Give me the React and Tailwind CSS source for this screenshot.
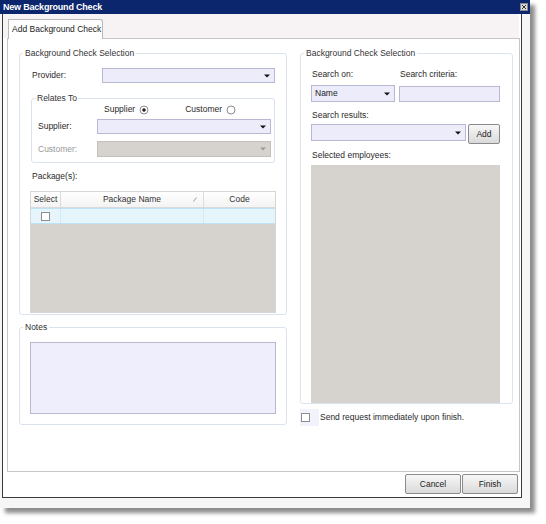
import React from 'react';

function Arrow({ disabled }) {
  return (
    <svg width="6" height="4" viewBox="0 0 6 4" className="mr-[4px] shrink-0">
      <path d="M0 0.5h6L3 3.5z" fill={disabled ? '#9a9a9a' : '#111'} />
    </svg>
  );
}

function Select({ className, value, disabled }) {
  return (
    <div
      className={
        'flex items-center justify-between border ' +
        (disabled ? 'bg-[#d6d3ce] border-[#c4c1bc] ' : 'bg-[#ececfb] border-[#b8b8d2] ') +
        className
      }
    >
      <span className="pl-[3px] text-[#222]">{value}</span>
      <Arrow disabled={disabled} />
    </div>
  );
}

function Group({ title, className, children }) {
  return (
    <div className={'border border-[#dbe3ec] rounded-[3px] bg-white ' + className}>
      <div className="-mt-[6px] ml-[3px] w-fit bg-white px-[2px] leading-[11px] text-[#333]">{title}</div>
      {children}
    </div>
  );
}

function Radio({ checked }) {
  return (
    <svg width="10" height="10" viewBox="0 0 10 10">
      <circle cx="5" cy="5" r="4" fill="#fff" stroke="#8d8d8d" strokeWidth="1" />
      {checked && <circle cx="5" cy="5" r="1.8" fill="#222" />}
    </svg>
  );
}

function Checkbox() {
  return <div className="w-[9px] h-[9px] border border-[#8e8e8e] bg-white" />;
}

export default function App() {
  return (
    <div className="w-[546px] h-[524px] bg-white text-[8.5px] leading-[11px] text-[#2a2a2a] [font-family:'Liberation_Sans',Arial,sans-serif]">
      <div className="w-[530px] h-[508px] bg-[#f6f6f6] shadow-[5px_5px_4px_rgba(0,0,0,0.45)] flex flex-col">
        {/* title bar */}
        <div className="h-[14px] bg-[#0b266c] flex items-center justify-between pl-[3px] pr-[2px]">
          <span className="text-white font-bold text-[9px] tracking-[-0.2px]">New Background Check</span>
          <div className="w-[8px] h-[8px] bg-[#d9d9d9] border border-[#888] flex items-center justify-center">
            <svg width="6" height="6" viewBox="0 0 6 6">
              <path d="M1 1l4 4M5 1L1 5" stroke="#333" strokeWidth="1" />
            </svg>
          </div>
        </div>

        <div className="ml-[2px] w-[520px] h-[484px] border-x border-b border-[#3a3a3a] bg-white flex flex-col">
          {/* tab strip */}
          <div className="h-[24px] mr-[2px] bg-[#f7f3f5] pl-[5px] pt-[5px]">
            <div className="relative z-10 w-[95px] h-[20px] bg-white border border-b-0 border-[#b9b9b9] rounded-tr-[3px] pl-[3px] pt-[4px] text-[#222]">
              Add Background Check
            </div>
          </div>

          {/* tab panel */}
          <div className="ml-[4px] w-[513px] h-[434px] border border-[#c6c6c6] bg-white flex pl-[11px] pt-[14px] gap-[13px]">
            {/* left column */}
            <div className="w-[268px] flex flex-col">
              <Group title="Background Check Selection" className="h-[262px] flex flex-col">
                <div className="mt-[9px] flex items-center pl-[12px]">
                  <span className="w-[70px]">Provider:</span>
                  <Select className="w-[173px] h-[15px]" value="" />
                </div>

                <div className="mt-[15px] ml-[11px] w-[244px] h-[65px] border border-[#dbe3ec] rounded-[3px] flex flex-col">
                  <div className="-mt-[6px] ml-[4px] w-fit bg-white px-[1px] text-[#333]">Relates To</div>
                  <div className="flex items-center h-[11px]">
                    <span className="ml-[72px]">Supplier</span>
                    <span className="ml-[4px]"><Radio checked /></span>
                    <span className="ml-[36px]">Customer</span>
                    <span className="ml-[4px]"><Radio /></span>
                  </div>
                  <div className="mt-[4px] flex items-center pl-[6px]">
                    <span className="w-[59px]">Supplier:</span>
                    <Select className="w-[174px] h-[15px]" value="" />
                  </div>
                  <div className="mt-[7px] flex items-center pl-[6px]">
                    <span className="w-[59px] text-[#9a9a9a]">Customer:</span>
                    <Select className="w-[174px] h-[16px]" value="" disabled />
                  </div>
                </div>

                <div className="mt-[8px] pl-[12px]">Package(s):</div>

                <div className="mt-[9px] ml-[10px] w-[246px] h-[122px] border border-[#d6d6d6] bg-[#d6d3ce] flex flex-col">
                  <div className="h-[16px] flex bg-gradient-to-b from-white to-[#f3f3f3] border-b border-[#dadada] text-[#333]">
                    <div className="w-[30px] flex items-center justify-center border-r border-[#dcdcdc]">Select</div>
                    <div className="w-[143px] relative flex items-center justify-center border-r border-[#dcdcdc]">
                      Package Name
                      <svg width="4" height="5" viewBox="0 0 4 5" className="absolute right-[6px] top-[5px]">
                        <path d="M0.5 4.5L3.5 0.5" stroke="#888" strokeWidth="0.8" />
                      </svg>
                    </div>
                    <div className="flex-1 flex items-center justify-center">Code</div>
                  </div>
                  <div className="h-[16px] flex bg-[#e6f4fc] border-y border-[#bfe3f6]">
                    <div className="w-[30px] flex items-center justify-center border-r border-[#d3eaf7]">
                      <Checkbox />
                    </div>
                    <div className="w-[143px] border-r border-[#d3eaf7]" />
                    <div className="flex-1" />
                  </div>
                </div>
              </Group>

              <Group title="Notes" className="mt-[12px] h-[98px] flex flex-col">
                <div className="mt-[9px] ml-[10px] w-[246px] h-[72px] bg-[#eeeefc] border border-[#b9b9d0]" />
              </Group>
            </div>

            {/* right column */}
            <div className="w-[213px] flex flex-col">
              <Group title="Background Check Selection" className="h-[351px] flex flex-col">
                <div className="pl-[10px] flex flex-col">
                  <div className="mt-[10px] flex">
                    <span className="pl-[1px] w-[89px]">Search on:</span>
                    <span>Search criteria:</span>
                  </div>
                  <div className="mt-[5px] flex items-start">
                    <Select className="w-[84px] h-[17px]" value="Name" />
                    <div className="ml-[4px] mt-[1px] w-[101px] h-[16px] bg-[#ececfb] border border-[#b8b8d2]" />
                  </div>
                  <div className="mt-[8px] pl-[1px]">Search results:</div>
                  <div className="mt-[3px] flex items-start">
                    <Select className="w-[155px] h-[17px]" value="" />
                    <button className="ml-[2px] w-[32px] h-[20px] border border-[#8a8a8a] rounded-[2px] bg-gradient-to-b from-[#f7f7f7] to-[#dadada] text-[#222] text-[8.5px]">
                      Add
                    </button>
                  </div>
                  <div className="mt-[6px] pl-[1px]">Selected employees:</div>
                  <div className="mt-[4px] w-[189px] h-[238px] bg-[#d6d3ce]" />
                </div>
              </Group>

              <div className="mt-[5px] flex items-center">
                <div className="w-[19px] h-[17px] bg-[#f2f2fd] flex items-center pl-[1px]">
                  <Checkbox />
                </div>
                <span className="ml-[1px]">Send request immediately upon finish.</span>
              </div>
            </div>
          </div>

          {/* buttons */}
          <div className="mt-[2px] mr-[3px] flex justify-end gap-[1px]">
            <button className="w-[56px] h-[20px] border border-[#8a8a8a] rounded-[2px] bg-gradient-to-b from-[#f7f7f7] to-[#dadada] text-[#222] text-[8.5px]">
              Cancel
            </button>
            <button className="w-[56px] h-[20px] border border-[#8a8a8a] rounded-[2px] bg-gradient-to-b from-[#f7f7f7] to-[#dadada] text-[#222] text-[8.5px]">
              Finish
            </button>
          </div>
        </div>
      </div>
    </div>
  );
}
